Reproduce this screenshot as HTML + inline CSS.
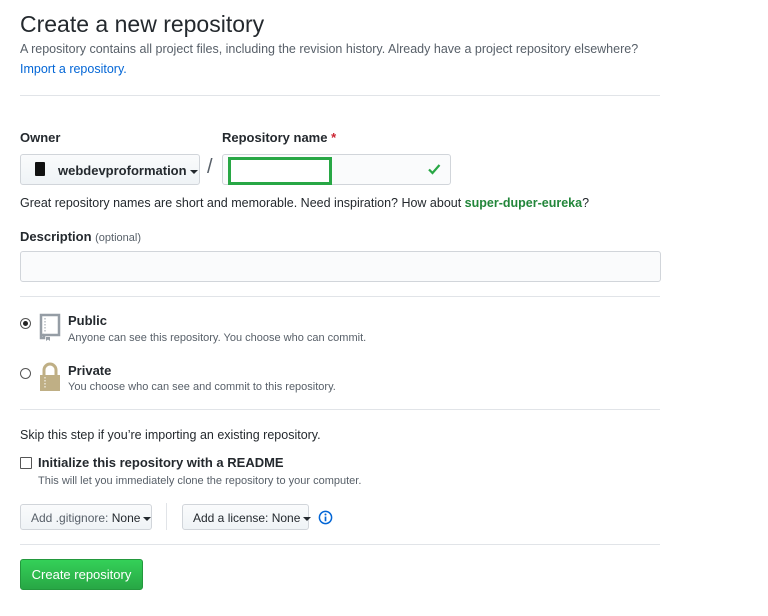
<!DOCTYPE html><html><head><style>
body{margin:0;width:768px;height:616px;background:#fff;font-family:"Liberation Sans",sans-serif;color:#24292e;position:relative;overflow:hidden}
.a{position:absolute;white-space:nowrap}
.hr{position:absolute;left:20px;width:640px;height:1px;background:#e1e4e8}
.btn{position:absolute;border:1px solid #d1d5da;border-radius:3px;background:linear-gradient(#fafbfc,#eff3f6);box-sizing:border-box;font-size:12px;color:#24292e}
.caret{display:inline-block;border:4px solid transparent;border-top-color:#24292e;border-bottom:0;vertical-align:middle;margin-left:3px}
</style></head><body>
<div class="a" style="left:20px;top:11px;font-size:23px">Create a new repository</div>
<div class="a" style="left:20px;top:42px;font-size:12.5px;color:#586069">A repository contains all project files, including the revision history. Already have a project repository elsewhere?</div>
<div class="a" style="left:20px;top:62px;font-size:12.5px;color:#0366d6">Import a repository.</div>
<div class="hr" style="top:95px"></div>
<div class="a" style="left:20px;top:130px;font-size:13px;font-weight:bold">Owner</div>
<div class="a" style="left:222px;top:130px;font-size:13px;font-weight:bold">Repository name <span style="color:#cb2431">*</span></div>
<div class="btn" style="left:20px;top:154px;width:180px;height:31px;font-size:13px;font-weight:bold"><span class="a" style="left:14px;top:7px;width:10px;height:14px;background:#111;border-radius:1px"></span><span class="a" style="left:37px;top:8px">webdevproformation<span class="caret"></span></span></div>
<div class="a" style="left:207px;top:156px;font-size:20px;color:#586069">/</div>
<div class="a" style="left:222px;top:154px;width:229px;height:31px;border:1px solid #d1d5da;border-radius:3px;box-sizing:border-box;background:#fafbfc"></div>
<div class="a" style="left:228px;top:157px;width:104px;height:28px;border:3px solid #28a745;box-sizing:border-box;background:#fff"></div>
<svg class="a" style="left:427px;top:162px" width="14" height="14" viewBox="0 0 14 14"><path d="M2 7.5l3.5 3.5L12.5 3" stroke="#28a745" stroke-width="2.2" fill="none"/></svg>
<div class="a" style="left:20px;top:196px;font-size:12.5px">Great repository names are short and memorable. Need inspiration? How about <b style="color:#22863a">super-duper-eureka</b>?</div>
<div class="a" style="left:20px;top:229px;font-size:13px;font-weight:bold">Description <span style="font-weight:normal;font-size:11px;color:#586069">(optional)</span></div>
<div class="a" style="left:20px;top:251px;width:641px;height:31px;border:1px solid #d1d5da;border-radius:3px;box-sizing:border-box;background:#fafbfc"></div>
<div class="hr" style="top:296px"></div>
<div class="a" style="left:20px;top:318px;width:11px;height:11px;border:1px solid #555;border-radius:50%;box-sizing:border-box"><div style="margin:2px;width:5px;height:5px;border-radius:50%;background:#222"></div></div>
<svg class="a" style="left:38px;top:313px" width="24" height="28" viewBox="0 0 24 28"><path d="M3 2h18v20H6v3H3z" fill="#fff" stroke="#959da5" stroke-width="2.5"/><path d="M3 22h3" stroke="#959da5" stroke-width="2.5"/><path d="M8 24v4l2-1.5 2 1.5v-4z" fill="#959da5"/><path d="M7 5v14" stroke="#959da5" stroke-dasharray="1.5 1.5"/></svg>
<div class="a" style="left:68px;top:313px;font-size:13px;font-weight:bold">Public</div>
<div class="a" style="left:68px;top:332px;font-size:11px;color:#586069">Anyone can see this repository. You choose who can commit.</div>
<div class="a" style="left:20px;top:368px;width:11px;height:11px;border:1px solid #555;border-radius:50%;box-sizing:border-box"></div>
<svg class="a" style="left:38px;top:362px" width="24" height="30" viewBox="0 0 24 30"><path d="M6 13V8a6 6 0 0 1 12 0v5" fill="none" stroke="#bfaf85" stroke-width="3"/><rect x="2" y="13" width="20" height="16" fill="#bfaf85"/><path d="M7 15v12" stroke="#fff" stroke-dasharray="1.5 1.5"/></svg>
<div class="a" style="left:68px;top:363px;font-size:13px;font-weight:bold">Private</div>
<div class="a" style="left:68px;top:381px;font-size:11px;color:#586069">You choose who can see and commit to this repository.</div>
<div class="hr" style="top:409px"></div>
<div class="a" style="left:20px;top:428px;font-size:12.5px">Skip this step if you’re importing an existing repository.</div>
<div class="a" style="left:20px;top:457px;width:12px;height:12px;border:1px solid #555;box-sizing:border-box;border-radius:1px"></div>
<div class="a" style="left:38px;top:455px;font-size:13px;font-weight:bold">Initialize this repository with a README</div>
<div class="a" style="left:38px;top:475px;font-size:11px;color:#586069">This will let you immediately clone the repository to your computer.</div>
<div class="btn" style="left:20px;top:504px;width:132px;height:26px"><span class="a" style="left:10px;top:6px"><span style="color:#586069">Add .gitignore:</span> None<span class="caret"></span></span></div>
<div class="a" style="left:166px;top:503px;width:1px;height:27px;background:#e1e4e8"></div>
<div class="btn" style="left:182px;top:504px;width:127px;height:26px"><span class="a" style="left:10px;top:6px">Add a license: None<span class="caret"></span></span></div>
<svg class="a" style="left:318px;top:510px" width="15" height="15" viewBox="0 0 16 16"><circle cx="8" cy="8" r="6.5" fill="none" stroke="#0366d6" stroke-width="1.6"/><rect x="7.1" y="7" width="1.8" height="5" fill="#0366d6"/><circle cx="8" cy="4.8" r="1.1" fill="#0366d6"/></svg>
<div class="hr" style="top:544px"></div>
<div class="a" style="left:20px;top:559px;width:123px;height:31px;border-radius:3px;background:linear-gradient(#34d058,#28a745);border:1px solid #23983d;box-sizing:border-box;color:#fff;font-size:13px;text-align:center;line-height:29px">Create repository</div>
</body></html>
